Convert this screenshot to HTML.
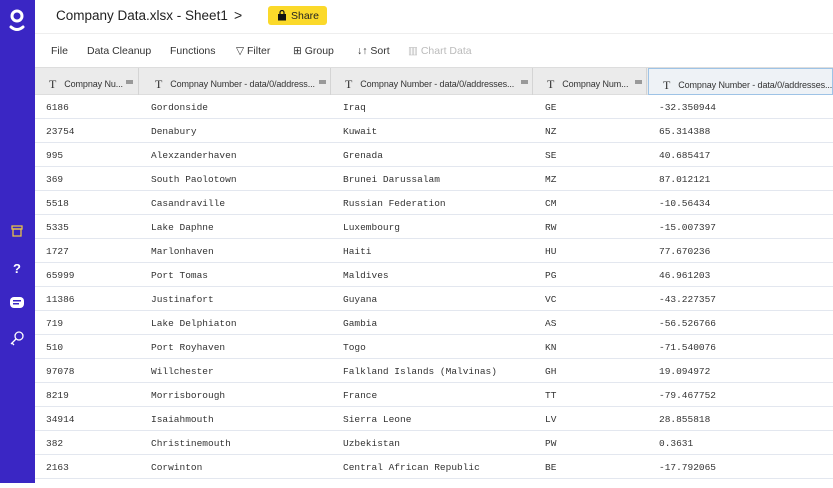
<!DOCTYPE html>
<html><head><style>
*{margin:0;padding:0;box-sizing:border-box}
body{width:833px;height:483px;overflow:hidden;background:#fff;font-family:"Liberation Sans",sans-serif;position:relative}
.sb{position:absolute;left:0;top:0;width:35px;height:483px;background:#3a26c4}
.title{position:absolute;left:56px;top:8px;font-size:13.5px;color:#222}
.chev{position:absolute;left:234px;top:7px;font-size:14px;color:#222}
.share{position:absolute;left:268px;top:6px;width:59px;height:19px;background:#fbd92a;border-radius:3px;font-size:10.5px;color:#222;padding:4px 0 0 23px}
.topline{position:absolute;left:35px;top:33px;right:0;height:1px;background:#eee}
.tb{position:absolute;top:45px;font-size:10.5px;color:#333}
.hdr{position:absolute;left:35px;top:67px;width:798px;height:28px;background:#ebebeb;border-top:1px solid #ddd;border-bottom:1px solid #ddd}
.hc{position:absolute;top:0;height:27px;border-right:1px solid #d4d4d4;font-size:9px;color:#333;padding-top:8px;white-space:nowrap;overflow:hidden;letter-spacing:-0.1px}
.hc b{font-family:"Liberation Serif",serif;font-weight:normal;font-size:12px;margin-right:8px;position:relative;top:1px}
.hc i{position:absolute;top:12px;width:7px;height:4px;background:#999}
.row{position:absolute;left:35px;width:798px;height:24px;border-bottom:1px solid #e3e7ef;font-family:"Liberation Mono",monospace;font-size:9.5px;color:#333}
.row span{position:absolute;top:7px}
</style></head><body>
<div class="sb">
<svg width="35" height="483" viewBox="0 0 35 483">
<circle cx="17" cy="16" r="5" fill="none" stroke="#fff" stroke-width="3"/>
<path d="M11 27 Q17 32 23 27" stroke="#fff" stroke-width="3" fill="none" stroke-linecap="round"/>
<rect x="12" y="226" width="10" height="3" fill="none" stroke="#e8c04a" stroke-width="1.3"/>
<rect x="13" y="229" width="8" height="7" fill="none" stroke="#e8c04a" stroke-width="1.3"/>
<text x="17" y="273" fill="#fff" font-size="13" font-weight="bold" text-anchor="middle" font-family="Liberation Sans">?</text>
<rect x="10" y="297" width="14" height="11" rx="4" fill="#fff"/>
<rect x="13" y="300" width="8" height="1.5" fill="#3a26c4"/><rect x="13" y="303" width="6" height="1.5" fill="#3a26c4"/>
<circle cx="19" cy="336" r="4" fill="none" stroke="#fff" stroke-width="1.3"/>
<path d="M16 339 L11 344 M12 343 L14 345" stroke="#fff" stroke-width="1.3"/>
</svg>
</div>
<div class="title">Company Data.xlsx - Sheet1</div>
<div class="chev">&gt;</div>
<div class="share"><svg style="position:absolute;left:9px;top:4px" width="10" height="11"><path d="M3 4 V2.5 A2 2 0 0 1 7 2.5 V4" stroke="#111" fill="none" stroke-width="1.2"/><rect x="1" y="4" width="8" height="6.5" fill="#111"/></svg>Share</div>
<div class="topline"></div>
<div class="tb" style="left:51px">File</div>
<div class="tb" style="left:87px">Data Cleanup</div>
<div class="tb" style="left:170px">Functions</div>
<div class="tb" style="left:236px">▽ Filter</div>
<div class="tb" style="left:293px">⊞ Group</div>
<div class="tb" style="left:357px">↓↑ Sort</div>
<div class="tb" style="left:408px;color:#bbb">▥ Chart Data</div>
<div class="hdr">
<div class="hc" style="left:0;width:104px;padding-left:14px"><b>T</b>Compnay Nu...<i style="left:91px"></i></div>
<div class="hc" style="left:104px;width:192px;padding-left:16px"><b>T</b>Compnay Number - data/0/address...<i style="left:180px"></i></div>
<div class="hc" style="left:296px;width:202px;padding-left:14px"><b>T</b>Compnay Number - data/0/addresses...<i style="left:190px"></i></div>
<div class="hc" style="left:498px;width:114px;padding-left:14px"><b>T</b>Compnay Num...<i style="left:102px"></i></div>
<div class="hc" style="left:613px;width:185px;padding-left:14px;border:1px solid #9ec3e6;background:#eef2f6"><b>T</b>Compnay Number - data/0/addresses...</div>
</div>
<div id="rows"></div>
<script>
var d=[["6186","Gordonside","Iraq","GE","-32.350944"],["23754","Denabury","Kuwait","NZ","65.314388"],["995","Alexzanderhaven","Grenada","SE","40.685417"],["369","South Paolotown","Brunei Darussalam","MZ","87.012121"],["5518","Casandraville","Russian Federation","CM","-10.56434"],["5335","Lake Daphne","Luxembourg","RW","-15.007397"],["1727","Marlonhaven","Haiti","HU","77.670236"],["65999","Port Tomas","Maldives","PG","46.961203"],["11386","Justinafort","Guyana","VC","-43.227357"],["719","Lake Delphiaton","Gambia","AS","-56.526766"],["510","Port Royhaven","Togo","KN","-71.540076"],["97078","Willchester","Falkland Islands (Malvinas)","GH","19.094972"],["8219","Morrisborough","France","TT","-79.467752"],["34914","Isaiahmouth","Sierra Leone","LV","28.855818"],["382","Christinemouth","Uzbekistan","PW","0.3631"],["2163","Corwinton","Central African Republic","BE","-17.792065"]];
var x=[11,116,308,510,624],h="";
d.forEach(function(r,i){h+='<div class="row" style="top:'+(95+i*24)+'px">';r.forEach(function(c,j){h+='<span style="left:'+x[j]+'px">'+c+'</span>'});h+='</div>'});
document.getElementById('rows').innerHTML=h;
</script>
</body></html>
